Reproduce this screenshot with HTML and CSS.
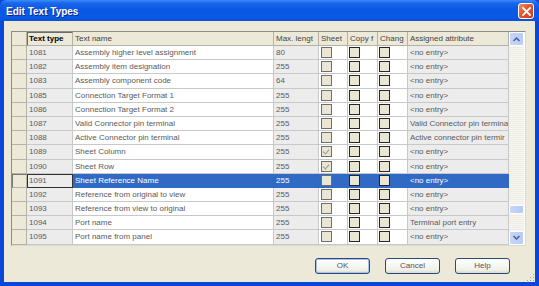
FILE: index.html
```html
<!DOCTYPE html>
<html>
<head>
<meta charset="utf-8">
<link rel="stylesheet" href="styles.css">
</head>
<body>
<div class="window">
  <div class="titlebar">
    <span class="title">Edit Text Types</span>
    <span class="close"><svg width="9" height="9" viewBox="0 0 9 9"><path d="M1 1L8 8M8 1L1 8" stroke="#fff" stroke-width="1.8" stroke-linecap="square"/></svg></span>
  </div>
  <div class="body">
    <div class="grid">
      <div class="table">
        <div class="row head">
          <div class="c rh"></div>
          <div class="c tt">Text type</div>
          <div class="c">Text name</div>
          <div class="c">Max. lengt</div>
          <div class="c">Sheet</div>
          <div class="c">Copy f</div>
          <div class="c">Chang</div>
          <div class="c">Assigned attribute</div>
        </div>
        <div class="row"><div class="c rh"></div><div class="c g">1081</div><div class="c w">Assembly higher level assignment</div><div class="c g">80</div><div class="c w"><i class="cb ro"></i></div><div class="c w"><i class="cb"></i></div><div class="c w"><i class="cb"></i></div><div class="c g">&lt;no entry&gt;</div></div>
        <div class="row"><div class="c rh"></div><div class="c g">1082</div><div class="c w">Assembly item designation</div><div class="c g">255</div><div class="c w"><i class="cb ro"></i></div><div class="c w"><i class="cb"></i></div><div class="c w"><i class="cb"></i></div><div class="c g">&lt;no entry&gt;</div></div>
        <div class="row"><div class="c rh"></div><div class="c g">1083</div><div class="c w">Assembly component code</div><div class="c g">64</div><div class="c w"><i class="cb ro"></i></div><div class="c w"><i class="cb"></i></div><div class="c w"><i class="cb"></i></div><div class="c g">&lt;no entry&gt;</div></div>
        <div class="row"><div class="c rh"></div><div class="c g">1085</div><div class="c w">Connection Target Format 1</div><div class="c g">255</div><div class="c w"><i class="cb ro"></i></div><div class="c w"><i class="cb"></i></div><div class="c w"><i class="cb"></i></div><div class="c g">&lt;no entry&gt;</div></div>
        <div class="row"><div class="c rh"></div><div class="c g">1086</div><div class="c w">Connection Target Format 2</div><div class="c g">255</div><div class="c w"><i class="cb ro"></i></div><div class="c w"><i class="cb"></i></div><div class="c w"><i class="cb"></i></div><div class="c g">&lt;no entry&gt;</div></div>
        <div class="row"><div class="c rh"></div><div class="c g">1087</div><div class="c w">Valid Connector pin terminal</div><div class="c g">255</div><div class="c w"><i class="cb ro"></i></div><div class="c w"><i class="cb"></i></div><div class="c w"><i class="cb"></i></div><div class="c g">Valid Connector pin termina</div></div>
        <div class="row"><div class="c rh"></div><div class="c g">1088</div><div class="c w">Active Connector pin terminal</div><div class="c g">255</div><div class="c w"><i class="cb ro"></i></div><div class="c w"><i class="cb"></i></div><div class="c w"><i class="cb"></i></div><div class="c g">Active connector pin termir</div></div>
        <div class="row"><div class="c rh"></div><div class="c g">1089</div><div class="c w">Sheet Column</div><div class="c g">255</div><div class="c w"><i class="cb ro on"></i></div><div class="c w"><i class="cb"></i></div><div class="c w"><i class="cb"></i></div><div class="c g">&lt;no entry&gt;</div></div>
        <div class="row"><div class="c rh"></div><div class="c g">1090</div><div class="c w">Sheet Row</div><div class="c g">255</div><div class="c w"><i class="cb ro on"></i></div><div class="c w"><i class="cb"></i></div><div class="c w"><i class="cb"></i></div><div class="c g">&lt;no entry&gt;</div></div>
        <div class="row sel"><div class="c rh cur"></div><div class="c g focus">1091</div><div class="c s">Sheet Reference Name</div><div class="c s">255</div><div class="c s"><i class="cb ro"></i></div><div class="c s"><i class="cb"></i></div><div class="c s"><i class="cb"></i></div><div class="c s">&lt;no entry&gt;</div></div>
        <div class="row"><div class="c rh"></div><div class="c g">1092</div><div class="c w">Reference from original  to view</div><div class="c g">255</div><div class="c w"><i class="cb ro"></i></div><div class="c w"><i class="cb"></i></div><div class="c w"><i class="cb"></i></div><div class="c g">&lt;no entry&gt;</div></div>
        <div class="row"><div class="c rh"></div><div class="c g">1093</div><div class="c w">Reference from view to original</div><div class="c g">255</div><div class="c w"><i class="cb ro"></i></div><div class="c w"><i class="cb"></i></div><div class="c w"><i class="cb"></i></div><div class="c g">&lt;no entry&gt;</div></div>
        <div class="row"><div class="c rh"></div><div class="c g">1094</div><div class="c w">Port name</div><div class="c g">255</div><div class="c w"><i class="cb ro"></i></div><div class="c w"><i class="cb"></i></div><div class="c w"><i class="cb"></i></div><div class="c g">Terminal port entry</div></div>
        <div class="row"><div class="c rh"></div><div class="c g">1095</div><div class="c w">Port name from panel</div><div class="c g">255</div><div class="c w"><i class="cb ro"></i></div><div class="c w"><i class="cb"></i></div><div class="c w"><i class="cb"></i></div><div class="c g">&lt;no entry&gt;</div></div>
      </div>
      <div class="vscroll">
        <div class="sbtn"><svg width="7" height="5" viewBox="0 0 7 5"><path d="M0.5 4L3.5 1L6.5 4" fill="none" stroke="#4d6185" stroke-width="1.5"/></svg></div>
        <div class="track"><div class="thumb"></div></div>
        <div class="sbtn"><svg width="7" height="5" viewBox="0 0 7 5"><path d="M0.5 1L3.5 4L6.5 1" fill="none" stroke="#4d6185" stroke-width="1.5"/></svg></div>
      </div>
    </div>
    <div class="buttons">
      <button class="btn def">OK</button>
      <button class="btn">Cancel</button>
      <button class="btn">Help</button>
    </div>
    <div class="grip"></div>
  </div>
</div>
</body>
</html>
```

FILE: styles.css
```css
html, body { margin: 0; padding: 0; }
body {
  width: 539px;
  height: 286px;
  overflow: hidden;
  font-family: "Liberation Sans", Arial, sans-serif;
  font-size: 8px;
}
.window {
  width: 539px;
  height: 286px;
  box-sizing: border-box;
  display: flex;
  flex-direction: column;
  background: #0a46d8;
  padding: 0 4px 4px 4px;
}
.titlebar {
  height: 21px;
  margin: 0 -4px;
  padding: 0 6px 0 6px;
  display: flex;
  align-items: center;
  justify-content: space-between;
  background: linear-gradient(#3b8cf8 0%, #1a66ec 15%, #0a58e4 45%, #0a5ae6 80%, #0a4fd8 100%);
  border-radius: 6px 6px 0 0;
}
.title {
  color: #fff;
  font-weight: bold;
  font-size: 10px;
  text-shadow: 1px 1px 0 #0a2a90;
  padding-top: 1px;
}
.close {
  width: 14px;
  height: 14px;
  margin-right: -1px;
  margin-top: 1px;
  border: 1px solid #fff;
  border-radius: 3px;
  background: linear-gradient(135deg, #ef8f6f 0%, #e2562d 45%, #c9401a 100%);
  display: flex;
  align-items: center;
  justify-content: center;
}
.body {
  flex: 1;
  background: #ece9d8;
  position: relative;
  display: flex;
  flex-direction: column;
}
.grid {
  margin: 10px 0 0 7px;
  width: 513px;
  border: 1px solid #8c8c8c;
  border-right-color: #dcdad0;
  border-bottom-color: #dcdad0;
  display: flex;
  background: #fff;
}
.table { flex: 0 0 497px; }
.row {
  display: grid;
  grid-template-columns: 15px 46px 201px 45px 29px 30px 30px 101px;
  height: 14.2px;
}
.row.head { height: 14px; }
.c {
  box-sizing: border-box;
  border-right: 1px solid #c8c8c8;
  border-bottom: 1px solid #c8c8c8;
  padding: 0 2px;
  line-height: 13px;
  white-space: nowrap;
  overflow: hidden;
  color: #5a5a5a;
  position: relative;
}
.head .c {
  background: #ece9d8;
  color: #444;
  border-right-color: #b5b2a4;
  border-bottom-color: #b5b2a4;
}
.head .tt {
  font-weight: bold;
  color: #000;
  border-left: 1px solid #6c6c6c;
  border-top: 1px solid #6c6c6c;
  line-height: 12px;
  padding-left: 1px;
}
.rh {
  background: #ece9d8;
  border-right-color: #b5b2a4;
  border-bottom-color: #b5b2a4;
}
.rh.cur { border-top: 1px solid #777; border-left: 1px solid #777; }
.g { background: #ececec; }
.w { background: #fff; }
.s { background: #316ac5; color: #fff; border-bottom-color: #316ac5; border-right-color: #316ac5; }
.focus {
  border: 1px solid #333;
  padding-left: 1px;
  line-height: 12px;
}
.cb {
  display: block;
  width: 11px;
  height: 11px;
  box-sizing: border-box;
  border: 1px solid #262626;
  background: #e9e6d4;
  margin: 1px 0 0 -1px;
  position: relative;
}
.cb.ro { border-color: #6e6e6e; margin-left: 0; }
.cb.on::after {
  content: "";
  position: absolute;
  left: 2px;
  top: 1px;
  width: 3px;
  height: 5px;
  border-right: 1.5px solid #9a9a9a;
  border-bottom: 1.5px solid #9a9a9a;
  transform: rotate(40deg);
}
.vscroll {
  flex: 0 0 15px;
  display: flex;
  flex-direction: column;
  background: #f5f4ef;
}
.sbtn {
  height: 14px;
  box-sizing: border-box;
  border: 1px solid #fff;
  border-radius: 2px;
  background: linear-gradient(90deg, #c6d5fb, #b8cbf8);
  display: flex;
  align-items: center;
  justify-content: center;
}
.track {
  flex: 1;
  position: relative;
  background: repeating-linear-gradient(0deg, #f7f6f1 0 1px, #eeede5 1px 2px);
}
.thumb {
  position: absolute;
  left: 0;
  right: 0;
  top: 159px;
  height: 9px;
  box-sizing: border-box;
  border: 1px solid #fff;
  border-radius: 2px;
  background: linear-gradient(90deg, #c8d6fb, #b4c8f6);
}
.buttons {
  display: flex;
  justify-content: flex-end;
  gap: 15px;
  margin: 12px 25px 0 0;
}
.btn {
  width: 55px;
  height: 16px;
  padding: 0;
  font-family: "Liberation Sans", Arial, sans-serif;
  font-size: 8px;
  color: #555;
  border: 1px solid #2a4a7a;
  border-radius: 3px;
  background: linear-gradient(#ffffff, #f0f0ea 80%, #d8d7cc);
}
.btn.def {
  box-shadow: inset 0 0 0 1px #a5c1f0;
}
.grip {
  position: absolute;
  right: 1px;
  bottom: 1px;
  width: 8px;
  height: 8px;
  background: radial-gradient(circle, #a8a596 0.8px, transparent 1px) 0 0 / 3px 3px;
  clip-path: polygon(100% 0, 100% 100%, 0 100%);
}
```
